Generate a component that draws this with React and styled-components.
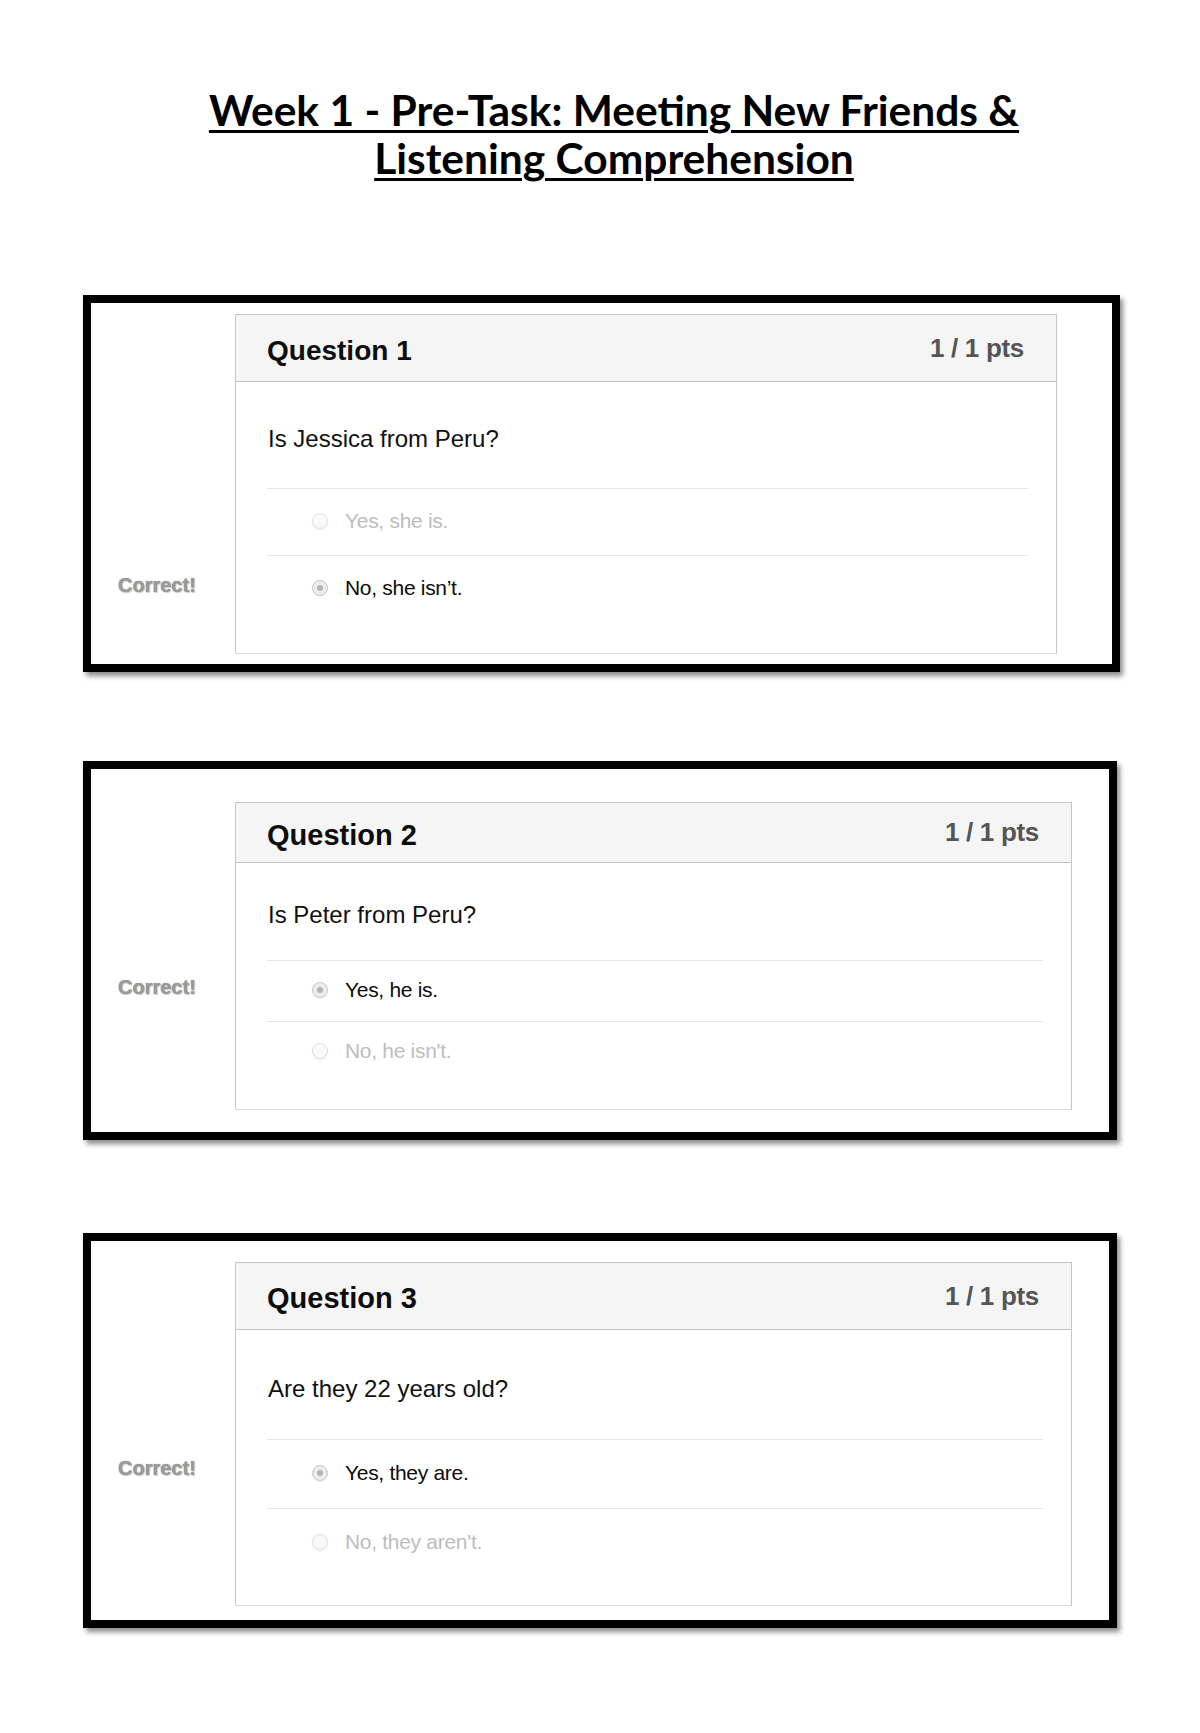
import React from 'react';
import styled, { createGlobalStyle } from 'styled-components';

const GlobalStyle = createGlobalStyle`
  body {
    margin: 0;
    background: #ffffff;
    font-family: "Liberation Sans", Arial, sans-serif;
  }
`;

const Page = styled.div`
  width: 1200px;
  min-height: 1733px;
  background: #ffffff;
`;

const TitleBlock = styled.h1`
  margin: 0;
  padding: 86px 0 0 28px;
  text-align: center;
  font-family: Lato, "Open Sans", sans-serif;
  font-weight: 700;
  font-size: 42.5px;
  line-height: 48px;
  color: #000;
`;

const TitleLine = styled.span`
  display: block;

  span {
    text-decoration: underline;
    text-decoration-thickness: 3px;
    text-underline-offset: 4px;
  }
`;

const Frame = styled.section`
  box-sizing: border-box;
  width: ${(p) => p.$w}px;
  margin: ${(p) => p.$gap}px 0 0 83px;
  border: 8px solid #000;
  padding: ${(p) => p.$padTop}px 0 ${(p) => p.$padBottom}px 144px;
  box-shadow: 3px 4px 5px rgba(0, 0, 0, 0.45);
  background: #fff;
`;

const Card = styled.div`
  box-sizing: border-box;
  width: ${(p) => p.$w}px;
  border: 1px solid #c6c6c6;
  border-bottom-color: #dcdcdc;
  background: #fff;
`;

const CardHeader = styled.div`
  box-sizing: border-box;
  height: ${(p) => p.$h}px;
  display: flex;
  align-items: center;
  justify-content: space-between;
  padding: 0 32px 0 31px;
  background: #f5f5f5;
  border-bottom: 1px solid #c2c2c2;
`;

const QuestionTitle = styled.h2`
  margin: 0;
  padding-top: 5px;
  font-size: ${(p) => p.$size}px;
  font-weight: 700;
  color: #0d0d0d;
`;

const Points = styled.span`
  font-size: 26px;
  font-weight: 700;
  color: #555;
  letter-spacing: -0.3px;
`;

const CardBody = styled.div`
  padding: 0 28px ${(p) => p.$tail}px 31px;
`;

const QuestionText = styled.p`
  box-sizing: border-box;
  height: ${(p) => p.$h}px;
  margin: 0;
  padding: ${(p) => p.$pad}px 0 0 1px;
  font-size: 24px;
  line-height: 28px;
  color: #111;
`;

const AnswerRow = styled.div`
  position: relative;
  box-sizing: border-box;
  height: ${(p) => p.$h}px;
  display: flex;
  align-items: center;
  gap: 17px;
  padding: 0 0 3px 45px;
  border-top: 1px solid #e6e6e6;
`;

const Radio = styled.span`
  box-sizing: border-box;
  width: 16px;
  height: 16px;
  border-radius: 50%;
  border: 1px solid ${(p) => (p.$on ? '#c9c9c9' : '#e2e2e2')};
  background: ${(p) => (p.$on ? '#ececec' : '#fafafa')};
  box-shadow: 0 1px 2px rgba(0, 0, 0, 0.06);
  display: flex;
  align-items: center;
  justify-content: center;

  &::after {
    content: '';
    width: 6px;
    height: 6px;
    border-radius: 50%;
    background: ${(p) => (p.$on ? '#b4b4b4' : 'transparent')};
  }
`;

const AnswerLabel = styled.span`
  font-size: 21px;
  letter-spacing: -0.3px;
  color: ${(p) => (p.$on ? '#0a0a0a' : '#bdbdbd')};
`;

// sits to the left of the chosen answer, outside the card
const CorrectFlag = styled.span`
  position: absolute;
  left: -149px;
  top: 50%;
  transform: translateY(calc(-50% + ${(p) => p.$shift}px));
  font-size: 20px;
  font-weight: 700;
  color: #9a9a9a;
  text-shadow: 0 0 1px #8a8a8a, 1px 1px 1px #d0d0d0;
  white-space: nowrap;
`;

const questions = [
  {
    n: 1,
    text: 'Is Jessica from Peru?',
    answers: [
      { label: 'Yes, she is.' },
      { label: 'No, she isn’t.', selected: true },
    ],
    box: { w: 1037, gap: 113, padTop: 11, padBottom: 10, cardW: 822, headerH: 67, titleSize: 28, qH: 106, qPad: 43, rowH: 67, tail: 31, shift: -4 },
  },
  {
    n: 2,
    text: 'Is Peter from Peru?',
    answers: [
      { label: 'Yes, he is.', selected: true },
      { label: "No, he isn't." },
    ],
    box: { w: 1034, gap: 89, padTop: 33, padBottom: 22, cardW: 837, headerH: 60, titleSize: 29, qH: 97, qPad: 38, rowH: 61, tail: 27, shift: -4 },
  },
  {
    n: 3,
    text: 'Are they 22 years old?',
    answers: [
      { label: 'Yes, they are.', selected: true },
      { label: "No, they aren't." },
    ],
    box: { w: 1034, gap: 93, padTop: 21, padBottom: 14, cardW: 837, headerH: 67, titleSize: 29, qH: 109, qPad: 45, rowH: 69, tail: 28, shift: -6 },
  },
];

const QuestionFrame = ({ q }) => {
  const b = q.box;
  return (
    <Frame $w={b.w} $gap={b.gap} $padTop={b.padTop} $padBottom={b.padBottom}>
      <Card $w={b.cardW}>
        <CardHeader $h={b.headerH}>
          <QuestionTitle $size={b.titleSize}>Question {q.n}</QuestionTitle>
          <Points>1 / 1 pts</Points>
        </CardHeader>
        <CardBody $tail={b.tail}>
          <QuestionText $h={b.qH} $pad={b.qPad}>{q.text}</QuestionText>
          {q.answers.map((a) => (
            <AnswerRow key={a.label} $h={b.rowH}>
              {a.selected && <CorrectFlag $shift={b.shift}>Correct!</CorrectFlag>}
              <Radio $on={a.selected} />
              <AnswerLabel $on={a.selected}>{a.label}</AnswerLabel>
            </AnswerRow>
          ))}
        </CardBody>
      </Card>
    </Frame>
  );
};

export default function App() {
  return (
    <Page>
      <GlobalStyle />
      <TitleBlock>
        <TitleLine><span>Week 1 - Pre-Task: Meeting New Friends &amp;</span></TitleLine>
        <TitleLine><span>Listening Comprehension</span></TitleLine>
      </TitleBlock>
      {questions.map((q) => (
        <QuestionFrame key={q.n} q={q} />
      ))}
    </Page>
  );
}
